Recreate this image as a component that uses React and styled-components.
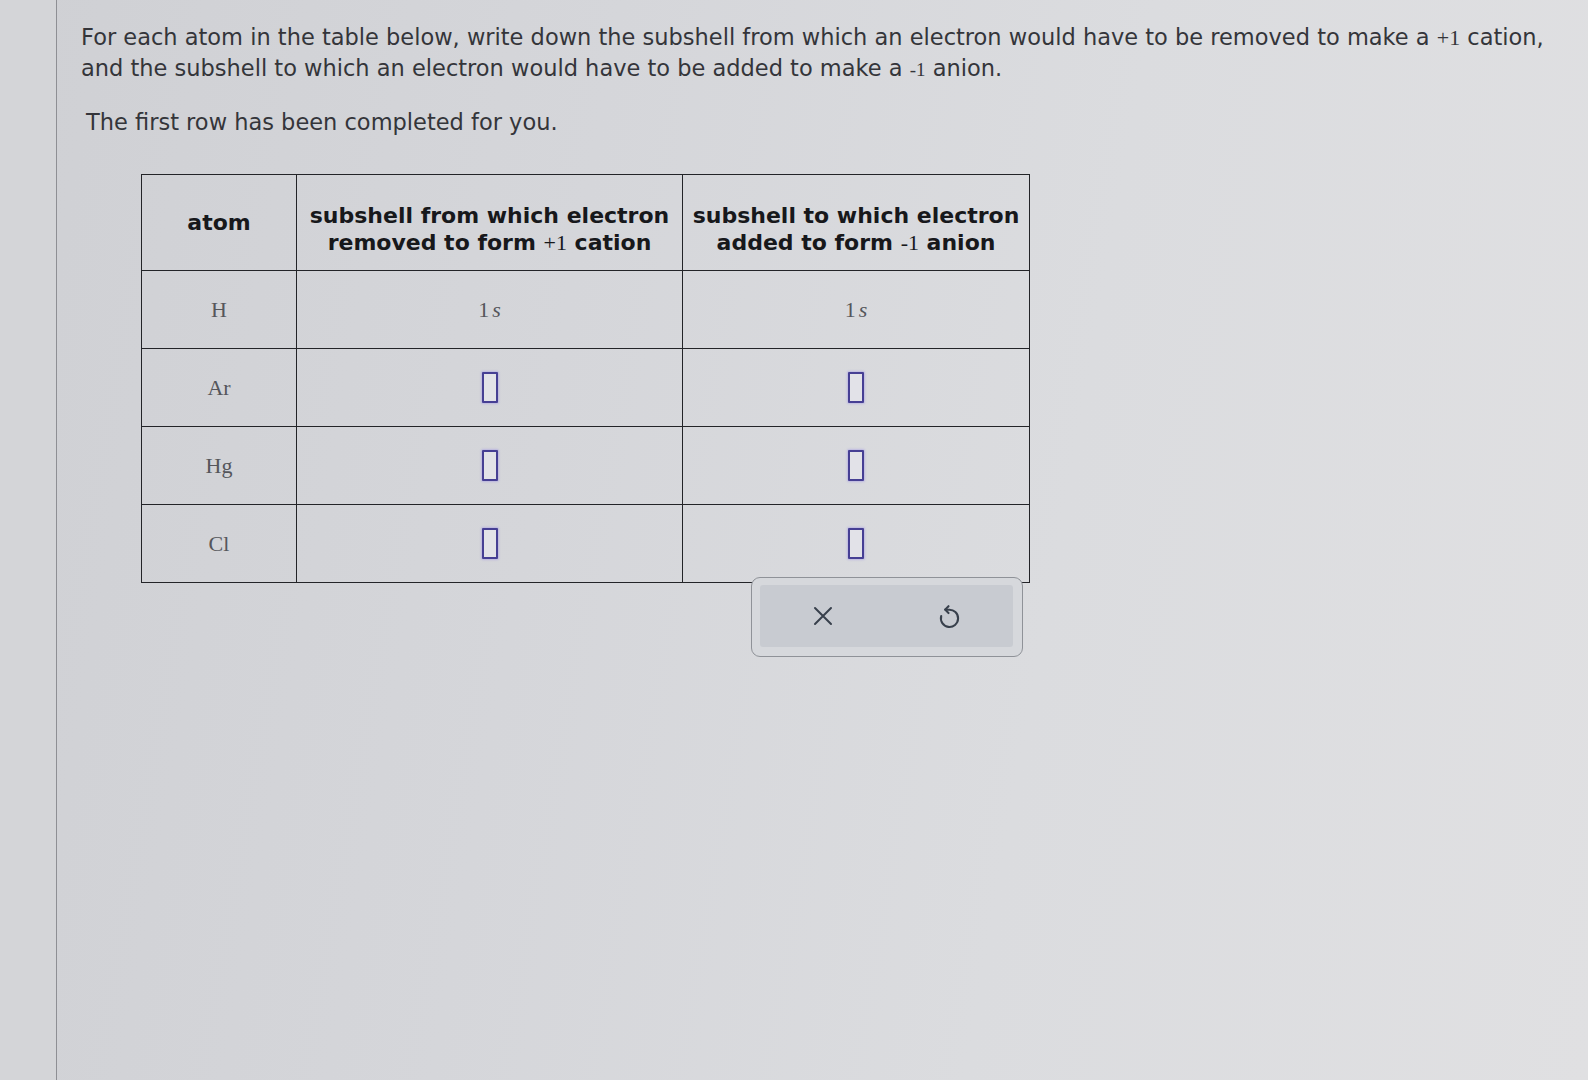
import React from "react";
import styled, { createGlobalStyle } from "styled-components";

const Global = createGlobalStyle`
  html, body { margin: 0; padding: 0; }
  body {
    width: 1588px;
    height: 1080px;
    overflow: hidden;
    background: linear-gradient(100deg, #cfd0d4 0%, #d5d6da 35%, #dbdcdf 65%, #e0e0e2 100%);
    font-family: "DejaVu Sans", Verdana, sans-serif;
  }
`;

const Page = styled.div`
  display: flex;
  height: 1080px;
`;

const Sidebar = styled.div`
  width: 56px;
  flex: none;
  border-right: 1px solid #8e8f94;
  background: #d4d5d8;
`;

const Main = styled.div`
  flex: 1;
  padding: 22px 0 0 24px;
`;

const Para = styled.p`
  margin: 0 0 ${(p) => p.$mb || 0}px ${(p) => p.$ml || 0}px;
  font-size: 22.5px;
  line-height: 30px;
  color: #34353a;
  white-space: nowrap;
`;

const Num = styled.span`
  font-family: "Liberation Serif", "Times New Roman", serif;
  font-weight: normal;
  font-size: ${(p) => p.$size || 22}px;
`;

const TableWrap = styled.div`
  margin: 37px 0 0 60px;
  width: 888px;
  display: flex;
  flex-direction: column;
`;

const Table = styled.table`
  border-collapse: collapse;
  width: 888px;
  table-layout: fixed;
`;

const Th = styled.th`
  border: 1.6px solid #232428;
  height: 96px;
  padding: ${(p) => (p.$low ? "12px 0 0" : "0")};
  box-sizing: border-box;
  font-size: 22px;
  line-height: 27px;
  font-weight: bold;
  color: #17181b;
  text-align: center;
  vertical-align: middle;
  white-space: nowrap;
`;

const Td = styled.td`
  border: 1.6px solid #232428;
  height: 77px;
  padding: 0;
  text-align: center;
  vertical-align: middle;
  font-family: "Liberation Serif", "Times New Roman", serif;
  font-size: 22px;
  color: #55565b;
`;

const Ital = styled.i`
  font-style: italic;
  margin-left: 3px;
`;

const AnswerBox = styled.span`
  display: inline-block;
  width: 12px;
  height: 27px;
  border: 2.5px solid #463f94;
  border-radius: 1px;
  background: #e2e2e8;
  box-shadow: 0 0 2px 1px rgba(150, 140, 230, 0.45);
  vertical-align: middle;
`;

const ActionsRow = styled.div`
  display: flex;
  justify-content: flex-end;
  padding-right: 6px;
  margin-top: -6px;
`;

const ActionsPanel = styled.div`
  width: 272px;
  height: 80px;
  box-sizing: border-box;
  border: 1.5px solid #8f9298;
  border-radius: 9px;
  background: #d6d8dc;
  padding: 7px 9px 9px 8px;
  display: flex;
`;

const ActionsInner = styled.div`
  flex: 1;
  display: flex;
  background: #c8cbd1;
  border-radius: 3px;
`;

const IconButton = styled.button`
  flex: 1;
  border: none;
  background: transparent;
  display: flex;
  align-items: center;
  justify-content: center;
  padding: 0;
  cursor: pointer;
`;

const rows = [
  { atom: "H", a: "1s", b: "1s" },
  { atom: "Ar" },
  { atom: "Hg" },
  { atom: "Cl" },
];

function Value({ v }) {
  if (!v) return <AnswerBox />;
  return (
    <span>
      {v[0]}
      <Ital>{v.slice(1)}</Ital>
    </span>
  );
}

export default function App() {
  return (
    <>
      <Global />
      <Page>
        <Sidebar />
        <Main>
          <Para $mb={22}>
            For each atom in the table below, write down the subshell from which an electron would have to be removed to make a <Num>+1</Num> cation,
            <br />
            and the subshell to which an electron would have to be added to make a <Num $size={19}>-1</Num> anion.
          </Para>
          <Para $ml={5}>The first row has been completed for you.</Para>
          <TableWrap>
            <Table>
              <colgroup>
                <col style={{ width: 155 }} />
                <col style={{ width: 386 }} />
                <col style={{ width: 347 }} />
              </colgroup>
              <thead>
                <tr>
                  <Th>atom</Th>
                  <Th $low>
                    subshell from which electron
                    <br />
                    removed to form <Num>+1</Num> cation
                  </Th>
                  <Th $low>
                    subshell to which electron
                    <br />
                    added to form <Num>-1</Num> anion
                  </Th>
                </tr>
              </thead>
              <tbody>
                {rows.map((r) => (
                  <tr key={r.atom}>
                    <Td>{r.atom}</Td>
                    <Td>
                      <Value v={r.a} />
                    </Td>
                    <Td>
                      <Value v={r.b} />
                    </Td>
                  </tr>
                ))}
              </tbody>
            </Table>
            <ActionsRow>
              <ActionsPanel>
                <ActionsInner>
                  <IconButton aria-label="clear">
                    <svg width="22" height="22" viewBox="0 0 22 22" fill="none" stroke="#38404c" strokeWidth="2" strokeLinecap="round">
                      <path d="M3 3 L19 19 M19 3 L3 19" />
                    </svg>
                  </IconButton>
                  <IconButton aria-label="undo">
                    <svg width="27" height="27" viewBox="0 0 22 22" fill="none" stroke="#38404c" strokeWidth="1.7" strokeLinecap="round" strokeLinejoin="round">
                      <path d="M4.24 10.69 A7 7 0 1 0 10.39 5.53 L7.6 5.4" />
                      <path d="M10.2 2.6 L7.4 5.4 L10.2 8.2" />
                    </svg>
                  </IconButton>
                </ActionsInner>
              </ActionsPanel>
            </ActionsRow>
          </TableWrap>
        </Main>
      </Page>
    </>
  );
}
